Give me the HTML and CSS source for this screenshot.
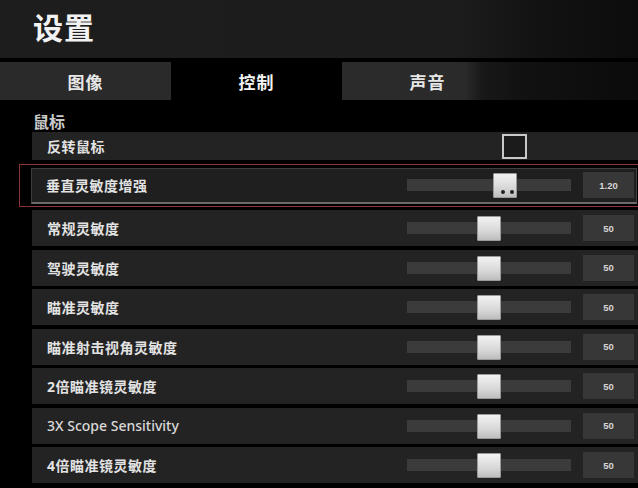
FILE: index.html
```html
<!DOCTYPE html>
<html lang="zh-CN">
<head>
    <meta charset="UTF-8">
    <meta name="viewport" content="width=device-width, initial-scale=1.0">
    <title>设置</title>
    <link rel="stylesheet" href="styles.css">
</head>
<body>
    <div class="header">
        <div class="title">设置</div>
    </div>

    <div class="tabs">
        <div class="tab">图像</div>
        <div class="tab active">控制</div>
        <div class="tab fade">声音</div>
        <div class="tab-rest"></div>
    </div>

    <div class="section-label">鼠标</div>

    <div class="list">
        <div class="row row-short">
            <div class="row-label">反转鼠标</div>
            <div class="checkbox"></div>
        </div>

        <div class="focus-box">
            <div class="row row-focus">
                <div class="row-label">垂直灵敏度增强</div>
                <div class="slider">
                    <div class="thumb grip" style="left: 86px;"><span></span><span></span></div>
                </div>
                <div class="value">1.20</div>
            </div>
        </div>

        <div class="row">
            <div class="row-label">常规灵敏度</div>
            <div class="slider"><div class="thumb" style="left: 70px;"></div></div>
            <div class="value">50</div>
        </div>
        <div class="row">
            <div class="row-label">驾驶灵敏度</div>
            <div class="slider"><div class="thumb" style="left: 70px;"></div></div>
            <div class="value">50</div>
        </div>
        <div class="row">
            <div class="row-label">瞄准灵敏度</div>
            <div class="slider"><div class="thumb" style="left: 70px;"></div></div>
            <div class="value">50</div>
        </div>
        <div class="row">
            <div class="row-label">瞄准射击视角灵敏度</div>
            <div class="slider"><div class="thumb" style="left: 70px;"></div></div>
            <div class="value">50</div>
        </div>
        <div class="row">
            <div class="row-label">2倍瞄准镜灵敏度</div>
            <div class="slider"><div class="thumb" style="left: 70px;"></div></div>
            <div class="value">50</div>
        </div>
        <div class="row">
            <div class="row-label latin">3X Scope Sensitivity</div>
            <div class="slider"><div class="thumb" style="left: 70px;"></div></div>
            <div class="value">50</div>
        </div>
        <div class="row">
            <div class="row-label">4倍瞄准镜灵敏度</div>
            <div class="slider"><div class="thumb" style="left: 70px;"></div></div>
            <div class="value">50</div>
        </div>
    </div>
</body>
</html>
```

FILE: styles.css
```css
* {
    margin: 0;
    padding: 0;
    box-sizing: border-box;
}

html, body {
    width: 638px;
    height: 488px;
    overflow: hidden;
}

body {
    background: #000;
    color: #e4e4e4;
    font-family: "Noto Sans", "Noto Sans CJK SC", sans-serif;
}

.header {
    height: 58px;
    padding: 0 0 6px 33px;
    display: flex;
    align-items: center;
    background: linear-gradient(to right, #1d1d1d 0%, #1c1c1c 72%, #121212 85%, #0c0c0c 100%);
}

.title {
    font-size: 30px;
    font-weight: 700;
    color: #f2f2f2;
    letter-spacing: 1px;
}

.tabs {
    margin-top: 4px;
    height: 38px;
    display: flex;
}

.tab {
    width: 171px;
    display: flex;
    align-items: center;
    justify-content: center;
    background: #2a2a2a;
    font-size: 17px;
    font-weight: 700;
    color: #e6e6e6;
    letter-spacing: 1px;
}

.tab.active {
    background: #000;
    color: #f4f4f4;
}

.tab.fade {
    background: linear-gradient(to right, #2b2b2b 0%, #2a2a2a 72%, #181818 82%, #131313 100%);
}

.tab-rest {
    flex: 1;
    background: linear-gradient(to right, #121212 0%, #0b0b0b 100%);
}

.section-label {
    margin-top: 12px;
    padding-left: 33px;
    height: 20px;
    line-height: 20px;
    font-size: 16px;
    font-weight: 700;
    color: #c9c9c9;
}

.list {
    display: flex;
    flex-direction: column;
    gap: 3.5px;
}

.row {
    margin-left: 32px;
    height: 36px;
    padding: 0 4px 0 15px;
    display: flex;
    align-items: center;
    background: #232323;
}

.row-short {
    height: 28px;
}

.row-label {
    flex: 1;
    font-size: 14px;
    font-weight: 700;
    color: #e2e2e2;
    letter-spacing: 0.5px;
}

.row-label.latin {
    font-weight: 500;
    letter-spacing: 0;
    color: #d8d8d8;
}

.checkbox {
    width: 25px;
    height: 25px;
    margin-right: 107px;
    border: 2px solid #c8c8c8;
    background: #1b1b1b;
}

.focus-box {
    margin: 0 -10px 0 19px;
    padding: 3px 10px 2px 11px;
    border: 1px solid #8a3434;
}

.row-focus {
    margin-left: 0;
    padding: 0 2px 0 14px;
    border: 1px solid #3e3e3e;
    border-bottom: 2px solid #6c6c6c;
    background: #1f1f1f;
}

.slider {
    position: relative;
    width: 164px;
    height: 12px;
    background: #3b3b3b;
}

.thumb {
    position: absolute;
    top: 50%;
    width: 24px;
    height: 25px;
    margin-top: -12px;
    background: linear-gradient(to bottom, #f2f2f2 0%, #d8d8d8 60%, #bdbdbd 100%);
    border: 1px solid #9a9a9a;
    border-radius: 1px;
}

.thumb.grip span {
    position: absolute;
    bottom: 3px;
    width: 4px;
    height: 4px;
    border-radius: 50%;
    background: #222;
}

.thumb.grip span:first-child {
    left: 7px;
}

.thumb.grip span:last-child {
    left: 16px;
}

.value {
    width: 51px;
    height: 26px;
    margin-left: 12px;
    display: flex;
    align-items: center;
    justify-content: center;
    background: #373737;
    font-family: "Liberation Sans", sans-serif;
    font-size: 9.5px;
    font-weight: 700;
    color: #d6d6d6;
}
```
